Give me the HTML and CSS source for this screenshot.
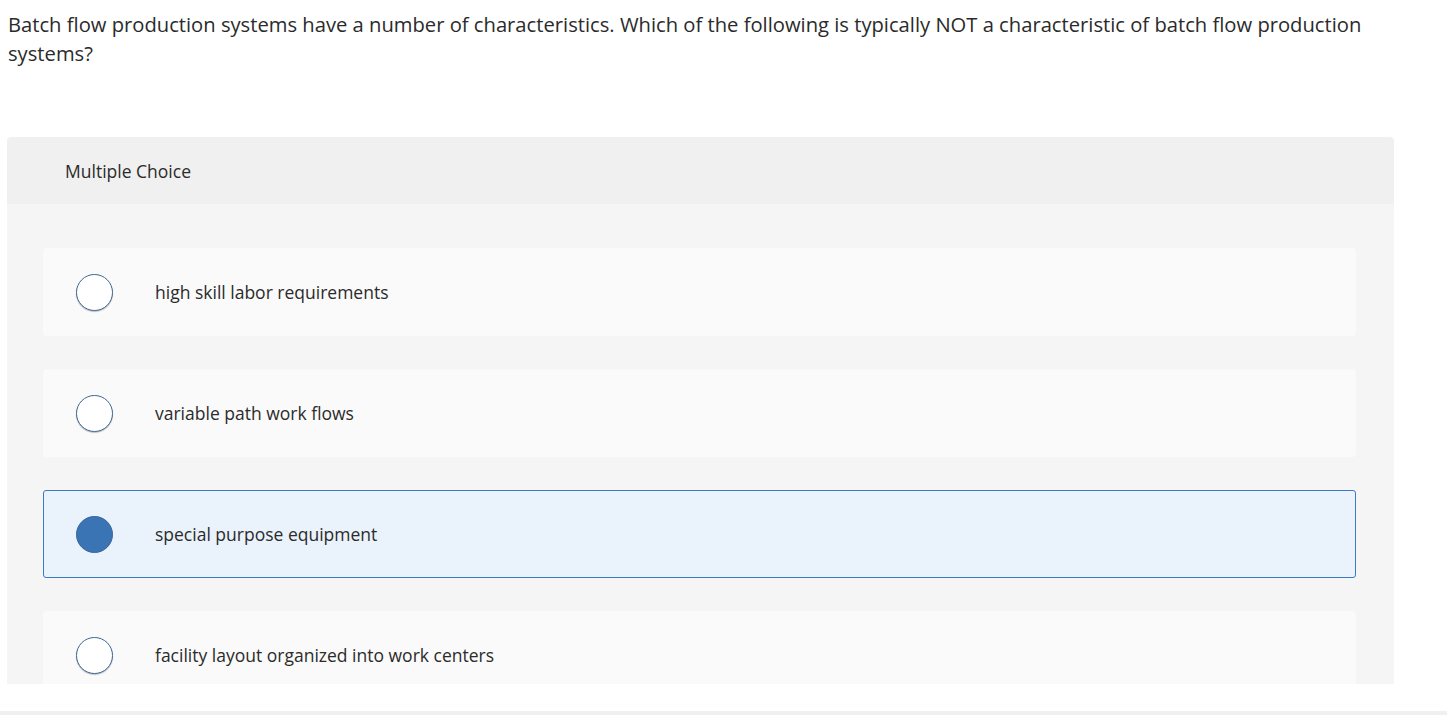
FILE: index.html
```html
<!DOCTYPE html>
<html>
<head>
<meta charset="utf-8">
<link rel="stylesheet" href="styles.css">
</head>
<body>
<div class="page">
  <p class="question">Batch flow production systems have a number of characteristics. Which of the following is typically NOT a characteristic of batch flow production systems?</p>
  <div class="panel">
    <div class="panel-head">Multiple Choice</div>
    <div class="panel-body">
      <div class="option"><span class="radio"></span><span class="label">high skill labor requirements</span></div>
      <div class="option"><span class="radio"></span><span class="label">variable path work flows</span></div>
      <div class="option selected"><span class="radio"></span><span class="label">special purpose equipment</span></div>
      <div class="option"><span class="radio"></span><span class="label">facility layout organized into work centers</span></div>
    </div>
  </div>
  <div class="footer-line"></div>
</div>
</body>
</html>
```
FILE: styles.css
```css
html, body {
  margin: 0;
  padding: 0;
  background: #fff;
}
body {
  font-family: "Open Sans", Lato, sans-serif;
  color: #2b2b2b;
}
.page {
  width: 1447px;
  height: 715px;
  overflow: hidden;
  display: flex;
  flex-direction: column;
}
.question {
  margin: 10px 0 0 8px;
  width: 1420px;
  font-size: 20.2px;
  line-height: 29px;
  color: #2b2b2b;
}
.panel {
  margin: 69px 0 0 7px;
  width: 1387px;
  border-radius: 4px 4px 0 0;
  overflow: hidden;
}
.panel-head {
  height: 67px;
  background: #f0f0f0;
  display: flex;
  align-items: center;
  padding-left: 58px;
  font-size: 17.5px;
  color: #2b2b2b;
}
.panel-body {
  height: 480px;
  overflow: hidden;
  background: #f5f5f5;
  padding: 44px 38px 0 36px;
  box-sizing: border-box;
  display: flex;
  flex-direction: column;
  gap: 33px;
}
.option {
  flex: none;
  height: 88px;
  box-sizing: border-box;
  background: #fafafa;
  border: 1px solid #fafafa;
  border-radius: 3px;
  display: flex;
  align-items: center;
  padding-left: 32px;
}
.option.selected {
  background: #eaf2fb;
  border-color: #3b7bc4;
}
.radio {
  width: 37px;
  height: 37px;
  box-sizing: border-box;
  border-radius: 50%;
  border: 1.5px solid #3e6893;
  background: #fff;
  box-shadow: 0 1px 1px rgba(0,0,0,0.25);
}
.option.selected .radio {
  background: #3a74b5;
  border-color: #36679c;
  box-shadow: none;
}
.label {
  margin-left: 42px;
  font-size: 17.5px;
  color: #2b2b2b;
}
.footer-line {
  margin-top: 27px;
  height: 4px;
  background: #f0f0f0;
}
```
